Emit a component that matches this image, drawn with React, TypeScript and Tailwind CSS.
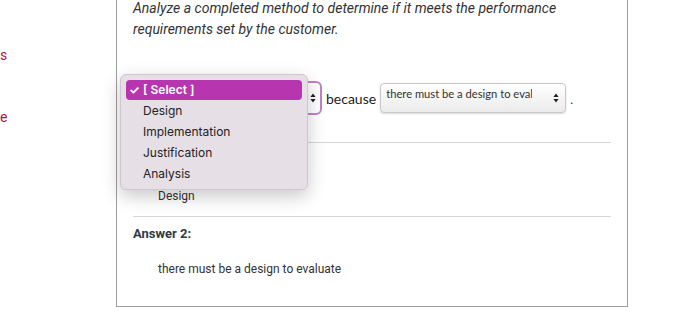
import React from "react";

const Arrows = () => (
  <svg width="6" height="10" viewBox="0 0 6 10" className="shrink-0">
    <path d="M3 0.5 L5.6 4 H0.4 Z" fill="#222" />
    <path d="M3 9.5 L5.6 6 H0.4 Z" fill="#222" />
  </svg>
);

const options = ["Design", "Implementation", "Justification", "Analysis"];

export default function App() {
  return (
    <div className="relative w-[680px] h-[329px] bg-white overflow-hidden flex font-['Roboto',sans-serif]">
      {/* left sidebar fragments */}
      <div className="w-[116px] shrink-0 relative text-[#a3194f] text-[14px]">
        <span className="absolute left-0 top-[45px]">s</span>
        <span className="absolute left-0 top-[107px]">e</span>
      </div>

      {/* question panel */}
      <div className="w-[512px] h-[307px] border-x border-b border-[#9e9e9e] pl-[16px] pr-[16px]">
        <p className="italic text-[14px] leading-[21px] text-[#333] mt-[-2px] font-['Roboto',sans-serif]">
          Analyze a completed method to determine if it meets the performance
          <br />
          requirements set by the customer.
        </p>

        <div className="flex items-center mt-[41px] h-[34px] font-['Lato',sans-serif]">
          <div className="w-[198px] h-[34px] ml-[-9px] rounded-[6px] border-2 border-[#c382c2] flex items-center justify-end pr-[4px] bg-white">
            <Arrows />
          </div>
          <span className="ml-[4px] text-[14px] text-[#222]">because</span>
          <div className="ml-[4px] w-[186px] h-[30px] rounded-[4px] border border-[#c8c8c8] bg-gradient-to-b from-white to-[#ebebeb] shadow-[0_1px_2px_rgba(0,0,0,0.15)] flex items-center justify-between pl-[5px] pr-[6px]">
            <span className="text-[11.2px] text-[#333] whitespace-nowrap overflow-hidden w-[146px] mt-[-8px]">
              there must be a design to evaluate
            </span>
            <Arrows />
          </div>
          <span className="ml-[4px] text-[12px] text-[#333] mt-[4px]">.</span>
        </div>

        <div className="mt-[27px] border-t border-[#d6d6d6]" />
        <div className="pl-[25px] pt-[45px] text-[12px] leading-[16px] text-[#333]">Design</div>
        <div className="mt-[12px] border-t border-[#d6d6d6]" />
        <div className="pt-[8px] text-[13px] leading-[18px] font-bold text-[#2d3b45]">Answer 2:</div>
        <div className="pl-[25px] pt-[18px] text-[12px] leading-[16px] text-[#333]">
          there must be a design to evaluate
        </div>
      </div>

      {/* open dropdown menu */}
      <div className="absolute left-[120px] top-[74px] w-[188px] h-[116px] rounded-[6px] bg-[#e7dfe6] border border-[#cfc6ce] shadow-[0_6px_18px_rgba(0,0,0,0.22)] px-[5px] pt-[5px] font-['Inter',sans-serif] text-[12px] text-[#222]">
        <div className="h-[20px] rounded-[4px] bg-[#b835b0] text-white font-semibold flex items-center">
          <span className="w-[17px] pl-[3px] text-[12px] font-bold">✓</span>
          <span>[ Select ]</span>
        </div>
        {options.map((o) => (
          <div key={o} className="h-[21px] flex items-center pl-[17px]">
            {o}
          </div>
        ))}
      </div>
    </div>
  );
}
